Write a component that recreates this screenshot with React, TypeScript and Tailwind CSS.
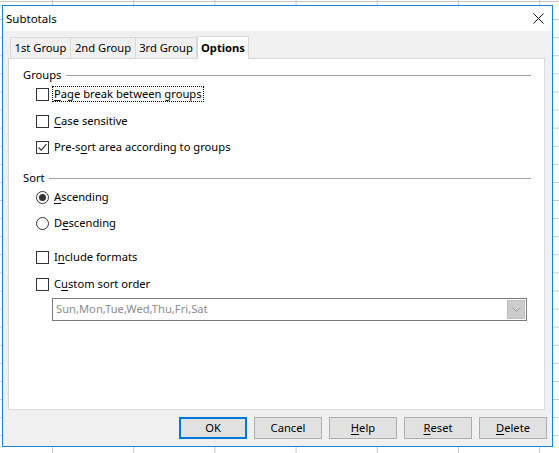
import React from 'react';

const font = { fontFamily: '"Noto Sans", "Open Sans", sans-serif' };

const Acc = ({ text, at }: { text: string; at: number }) => (
  <>
    {text.slice(0, at)}
    <span className="underline underline-offset-2">{text[at]}</span>
    {text.slice(at + 1)}
  </>
);

const CheckBox = ({ checked }: { checked?: boolean }) => (
  <div className="w-[13px] h-[13px] border border-[#333333] bg-white flex items-center justify-center shrink-0">
    {checked && (
      <svg width="11" height="11" viewBox="0 0 11 11">
        <path d="M1.5 5.5 L4.2 8.2 L9.5 2.2" fill="none" stroke="#333333" strokeWidth="1.1" />
      </svg>
    )}
  </div>
);

const Radio = ({ checked }: { checked?: boolean }) => (
  <div className="w-[13px] h-[13px] rounded-full border border-[#333333] bg-white flex items-center justify-center shrink-0">
    {checked && <div className="w-[7px] h-[7px] rounded-full bg-[#333333]" />}
  </div>
);

const Section = ({ title, lineLeft }: { title: string; lineLeft: string }) => (
  <div className="flex items-center h-[16px] pl-[14px] pr-[13px]">
    <span className="leading-none">{title}</span>
    <div className={`flex-1 h-px bg-[#a0a0a0] ${lineLeft}`} />
  </div>
);

const Btn = ({ children, focus }: { children: React.ReactNode; focus?: boolean }) => (
  <div
    className={`w-[68px] h-[22px] flex items-center justify-center bg-[#e1e1e1] ${
      focus ? 'border-2 border-[#0078d7]' : 'border border-[#adadad]'
    }`}
  >
    {children}
  </div>
);

export default function App() {
  return (
    <div
      className="w-[559px] h-[453px] overflow-hidden pt-[5px] pl-[2px] bg-white bg-[linear-gradient(to_right,#c6c6c6_1px,transparent_1px),linear-gradient(to_bottom,#c6c6c6_1px,transparent_1px)] bg-size-[81.2px_18.1px] bg-position-[52px_1px] text-[11.2px] text-black"
      style={font}
    >
      <div className="w-[551px] h-[442px] border border-[#1883d7] bg-[#f0f0f0] flex flex-col">
        {/* title bar */}
        <div className="h-[25px] bg-white flex items-center justify-between pl-[3px] pr-[8px]">
          <span className="text-[11.5px]">Subtotals</span>
          <svg width="11" height="11" viewBox="0 0 11 11">
            <path d="M0.5 0.5 L10.5 10.5 M10.5 0.5 L0.5 10.5" stroke="#111" strokeWidth="1" />
          </svg>
        </div>

        {/* tabs */}
        <div className="flex items-end pl-[7px] mt-[5px] h-[22px] relative z-10">
          <div className="w-[60px] h-[21px] border border-b-0 border-r-0 border-[#d9d9d9] flex items-center justify-center">1st Group</div>
          <div className="w-[65px] h-[21px] border border-b-0 border-r-0 border-[#d9d9d9] flex items-center justify-center">2nd Group</div>
          <div className="w-[62px] h-[21px] border border-b-0 border-[#d9d9d9] flex items-center justify-center">3rd Group</div>
          <div className="w-[52px] h-[23px] -mb-px bg-white border border-b-0 border-[#d9d9d9] flex items-center justify-center font-bold">
            Options
          </div>
        </div>

        {/* panel */}
        <div className="ml-[5px] w-[537px] h-[352px] bg-white border border-[#d9d9d9] pt-[8px] flex flex-col">
          <Section title="Groups" lineLeft="ml-[5px]" />
          <div className="flex flex-col pl-[27px] mt-[1px]">
            <div className="flex items-center gap-[4px] h-[20px]">
              <CheckBox />
              <span className="outline outline-1 outline-dotted outline-black px-px leading-[14px]">
                <Acc text="Page break between groups" at={0} />
              </span>
            </div>
            <div className="flex items-center gap-[5px] h-[20px] mt-[7px]">
              <CheckBox />
              <span><Acc text="Case sensitive" at={0} /></span>
            </div>
            <div className="flex items-center gap-[5px] h-[20px] mt-[6px]">
              <CheckBox checked />
              <span><Acc text="Pre-sort area according to groups" at={5} /></span>
            </div>
          </div>

          <div className="mt-[13px]">
            <Section title="Sort" lineLeft="ml-[4px]" />
          </div>
          <div className="flex flex-col pl-[27px] mt-[1px]">
            <div className="flex items-center gap-[5px] h-[20px]">
              <Radio checked />
              <span><Acc text="Ascending" at={0} /></span>
            </div>
            <div className="flex items-center gap-[5px] h-[20px] mt-[6px]">
              <Radio />
              <span><Acc text="Descending" at={1} /></span>
            </div>
            <div className="flex items-center gap-[5px] h-[20px] mt-[14px]">
              <CheckBox />
              <span><Acc text="Include formats" at={1} /></span>
            </div>
            <div className="flex items-center gap-[5px] h-[20px] mt-[7px]">
              <CheckBox />
              <span><Acc text="Custom sort order" at={1} /></span>
            </div>
          </div>

          <div className="ml-[43px] mt-[4px] w-[475px] h-[23px] border border-[#7a7a7a] flex items-center justify-between pl-[3px] pr-px">
            <span className="text-[#8d8d8d]">Sun,Mon,Tue,Wed,Thu,Fri,Sat</span>
            <div className="w-[18px] h-[19px] bg-[#cccccc] border border-[#bfbfbf] flex items-center justify-center">
              <svg width="9" height="6" viewBox="0 0 9 6">
                <path d="M0.5 0.5 L4.5 4.5 L8.5 0.5" fill="none" stroke="#9a9a9a" strokeWidth="1" />
              </svg>
            </div>
          </div>
        </div>

        {/* buttons */}
        <div className="flex justify-end gap-[7px] pr-[5px] mt-[7px]">
          <Btn focus>OK</Btn>
          <Btn>Cancel</Btn>
          <Btn><Acc text="Help" at={0} /></Btn>
          <Btn><Acc text="Reset" at={0} /></Btn>
          <Btn><Acc text="Delete" at={0} /></Btn>
        </div>
      </div>
    </div>
  );
}
